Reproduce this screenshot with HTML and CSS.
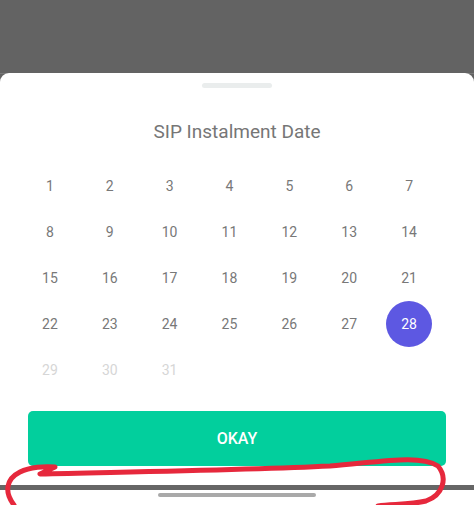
FILE: index.html
```html
<!DOCTYPE html>
<html>
<head>
<meta charset="utf-8">
<link rel="stylesheet" href="styles.css">
</head>
<body>
<div class="screen">
  <div class="backdrop"></div>
  <div class="sheet">
    <div class="handle"></div>
    <h1 class="title">SIP Instalment Date</h1>
    <div class="grid">
      <span class="day">1</span><span class="day">2</span><span class="day">3</span><span class="day">4</span><span class="day">5</span><span class="day">6</span><span class="day">7</span>
      <span class="day">8</span><span class="day">9</span><span class="day">10</span><span class="day">11</span><span class="day">12</span><span class="day">13</span><span class="day">14</span>
      <span class="day">15</span><span class="day">16</span><span class="day">17</span><span class="day">18</span><span class="day">19</span><span class="day">20</span><span class="day">21</span>
      <span class="day">22</span><span class="day">23</span><span class="day">24</span><span class="day">25</span><span class="day">26</span><span class="day">27</span><span class="day selected"><span class="dot">28</span></span>
      <span class="day off">29</span><span class="day off">30</span><span class="day off">31</span>
    </div>
    <button class="okay">OKAY</button>
    <div class="navbar"></div>
    <div class="home-row"><div class="home"></div></div>
  </div>
  <svg class="scribble" width="474" height="505" viewBox="0 0 474 505">
    <path d="M14 505 C4 492 6 479 20 472 C30 467 45 466 55 467 L40 474 C120 472 250 470 330 466 C380 462 420 454 438 466 C448 478 443 495 426 501 C410 505 392 504 378 506" fill="none" stroke="#e6283c" stroke-width="5" stroke-linecap="round" stroke-linejoin="round"/>
  </svg>
</div>
</body>
</html>
```
FILE: styles.css
```css
* { box-sizing: border-box; }
html, body { margin: 0; padding: 0; }
body {
  background: #ffffff;
  font-family: Roboto, "Noto Sans", sans-serif;
}
.screen {
  position: relative;
  width: 474px;
  height: 505px;
  overflow: hidden;
  background: #636363;
}
.backdrop {
  height: 74px;
  border-bottom: 1px solid #7a7a7a;
}
.sheet {
  background: #ffffff;
  border-radius: 9px 9px 0 0;
  margin-top: -1px;
  padding-top: 10px;
  display: flex;
  flex-direction: column;
  height: 432px;
}
.handle {
  align-self: center;
  width: 70px;
  height: 5px;
  border-radius: 3px;
  background: #eaeded;
}
.title {
  margin: 32px 0 0;
  text-align: center;
  font-weight: 400;
  font-size: 19px;
  line-height: 24px;
  color: #767676;
}
.grid {
  margin: 19px 0 0 20px;
  width: 419px;
  display: grid;
  grid-template-columns: repeat(7, 1fr);
  grid-auto-rows: 46px;
}
.day {
  display: flex;
  align-items: center;
  justify-content: center;
  font-size: 14px;
  color: #787878;
}
.day.off { color: #d6d6d6; }
.dot {
  width: 46px;
  height: 46px;
  border-radius: 50%;
  background: #5d58e2;
  color: #ffffff;
  display: flex;
  align-items: center;
  justify-content: center;
}
.okay {
  margin: 18px 28px 0;
  height: 55px;
  border: 0;
  border-radius: 5px;
  background: #02cf9d;
  color: #ffffff;
  font-family: Roboto, "Noto Sans", sans-serif;
  font-weight: 500;
  font-size: 16px;
  padding: 0;
}
.navbar {
  margin-top: 19px;
  height: 5px;
  background: #666666;
}
.home-row {
  display: flex;
  padding-top: 3px;
  padding-left: 158px;
}
.home {
  width: 158px;
  height: 4px;
  border-radius: 2px;
  background: #a9a9a9;
}
.scribble {
  position: absolute;
  left: 0;
  top: 0;
  pointer-events: none;
}
```
